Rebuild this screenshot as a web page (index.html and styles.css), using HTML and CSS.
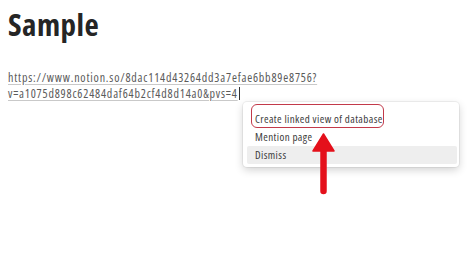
FILE: index.html
```html
<!DOCTYPE html>
<html>
<head>
<meta charset="utf-8">
<link rel="stylesheet" href="styles.css">
</head>
<body>
<main class="page">
  <h1 class="title">Sample</h1>
  <p class="link-line"><span class="link">https://www.notion.so/8dac114d43264dd3a7efae6bb89e8756?<br>v=a1075d898c62484daf64b2cf4d8d14a0&amp;pvs=4</span><span class="caret"></span></p>
</main>
<div class="menu">
  <span class="ring"></span>
  <div class="item">Create linked view of database</div>
  <div class="item">Mention page</div>
  <div class="item hovered">Dismiss</div>
</div>
<svg class="arrow" width="28" height="66" viewBox="0 0 28 66">
  <line x1="13.5" y1="18" x2="13.5" y2="61" stroke="#e4101b" stroke-width="6.5" stroke-linecap="round"/>
  <polygon points="13.5,4 3,21 24,21" fill="#e4101b" stroke="#e4101b" stroke-width="1.5" stroke-linejoin="round"/>
</svg>
</body>
</html>
```
FILE: styles.css
```css
html, body {
  margin: 0;
  padding: 0;
  background: #ffffff;
}
body {
  width: 474px;
  height: 266px;
  overflow: hidden;
  position: relative;
  font-family: "Open Sans", "Noto Sans", sans-serif;
}
.page {
  padding: 4px 0 0 8px;
}
.title {
  margin: 0;
  font-size: 31px;
  line-height: 40px;
  font-weight: 700;
  font-stretch: 85%;
  color: #252525;
  letter-spacing: 0.5px;
}
.link-line {
  margin: 26px 0 0 0;
  font-size: 12px;
  line-height: 16px;
  color: #5a5a5a;
  font-stretch: 85%;
  letter-spacing: 0.8px;
}
.link {
  text-decoration: underline;
  text-decoration-color: #c9c9c9;
  text-underline-offset: 2px;
}
.caret {
  display: inline-block;
  width: 1px;
  height: 13px;
  background: #333;
  vertical-align: -2px;
  margin-left: 1px;
}
.menu {
  position: absolute;
  left: 243px;
  top: 102px;
  width: 216px;
  box-sizing: border-box;
  padding: 8px 2px 3px 4px;
  background: #fff;
  border-radius: 4px;
  box-shadow: 0 0 0 1px rgba(0,0,0,0.05), 0 3px 9px rgba(0,0,0,0.18);
  font-size: 11px;
  color: #3c3c3c;
  font-stretch: 85%;
  letter-spacing: 0.4px;
}
.item {
  height: 18px;
  line-height: 18px;
  padding-left: 8px;
  border-radius: 2px;
}
.item.hovered {
  background: #eeeeee;
}
.ring {
  position: absolute;
  left: 8px;
  top: 2px;
  width: 133px;
  height: 24px;
  box-sizing: border-box;
  border: 1.5px solid #c23a4a;
  border-radius: 6px;
}
.arrow {
  position: absolute;
  left: 310px;
  top: 130px;
}
```
